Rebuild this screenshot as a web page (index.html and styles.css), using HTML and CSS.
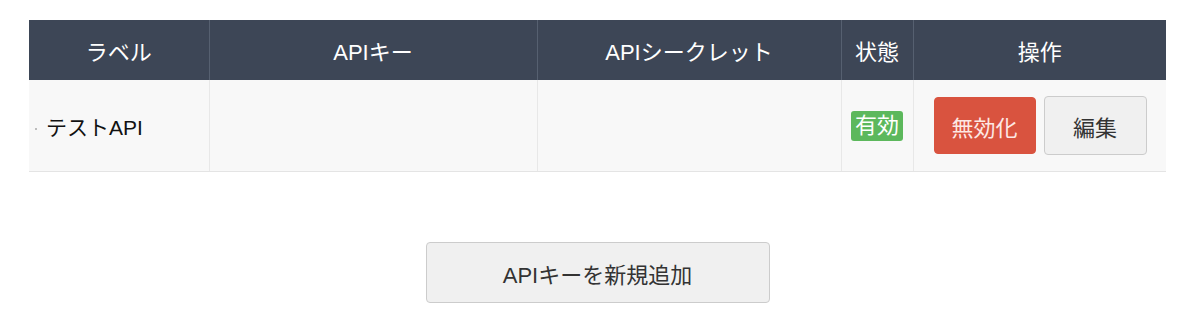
FILE: index.html
```html
<!DOCTYPE html>
<html lang="ja">
<head>
<meta charset="utf-8">
<link rel="stylesheet" href="styles.css">
</head>
<body>
<div class="wrap">
  <table class="keys">
    <colgroup>
      <col class="c-label"><col class="c-key"><col class="c-secret"><col class="c-state"><col class="c-ops">
    </colgroup>
    <thead>
      <tr><th>ラベル</th><th>APIキー</th><th>APIシークレット</th><th>状態</th><th>操作</th></tr>
    </thead>
    <tbody>
      <tr>
        <td class="label"><span class="dot"></span>テストAPI</td>
        <td></td>
        <td></td>
        <td class="state"><span class="badge">有効</span></td>
        <td class="ops"><button class="btn danger">無効化</button><button class="btn">編集</button></td>
      </tr>
    </tbody>
  </table>
  <div class="add-row"><button class="btn add">APIキーを新規追加</button></div>
</div>
</body>
</html>
```
FILE: styles.css
```css
html, body { margin: 0; padding: 0; background: #fff; }
body { font-family: "Liberation Sans", "Noto Sans CJK JP", sans-serif; color: #222; }
.wrap { width: 1137px; margin: 20px 0 0 29px; }
.keys { width: 1137px; border-collapse: collapse; table-layout: fixed; }
.c-label { width: 180px; } .c-key { width: 328px; } .c-secret { width: 304px; } .c-state { width: 72px; } .c-ops { width: 253px; }
.keys th { background: #3d4656; color: #fff; font-weight: normal; font-size: 22px; height: 60px; padding: 0; text-align: center; border-left: 1px solid #566070; }
.keys th:first-child { border-left: none; }
.keys td { background: #f8f8f8; height: 91px; padding: 0; border-left: 1px solid #e8e8e8; border-bottom: 1px solid #e4e4e4; font-size: 21px; color: #111; vertical-align: middle; }
.keys td:first-child { border-left: none; }
.label { padding-left: 6px !important; }
.dot { display: inline-block; width: 2px; height: 2px; background: #aaa; border-radius: 1px; margin-right: 9px; vertical-align: 5px; }
.state { text-align: center; }
.badge { display: inline-block; background: #5cb85c; color: #fff; font-size: 22px; line-height: 30px; padding: 0 4px; border-radius: 3px; }
.ops { padding-left: 20px !important; }
.btn { font-family: inherit; font-size: 22px; background: #f0f0f0; color: #333; border: 1px solid #ccc; border-radius: 4px; width: 103px; height: 59px; padding: 0; margin: 0 8px 0 0; vertical-align: middle; }
.btn.danger { background: #d9533f; border-color: #d9533f; color: #fde8e4; height: 57px; width: 102px; }
.add-row { display: flex; justify-content: center; margin-top: 70px; }
.btn.add { width: 344px; height: 61px; margin: 0; color: #333; }
```
